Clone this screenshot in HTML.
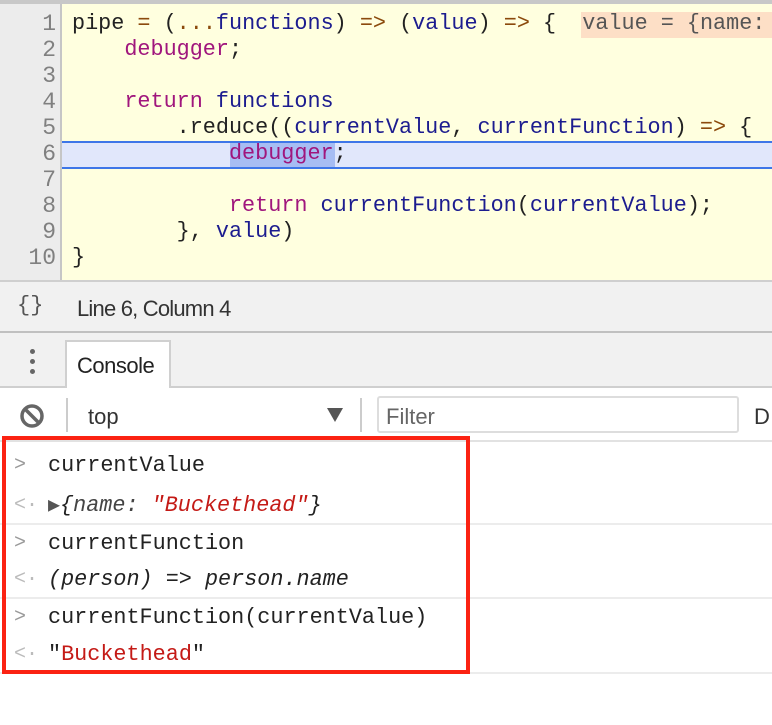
<!DOCTYPE html>
<html><head><style>
*{margin:0;padding:0;box-sizing:border-box}
body{width:772px;height:675px;overflow:hidden;background:#fff;position:relative;font-family:"Liberation Sans",sans-serif}
.mono{font-family:"Liberation Mono","DejaVu Sans Mono",monospace;font-size:21.8px;white-space:pre}
.abs{position:absolute}
#top{left:0;top:0;width:772px;height:4px;background:#c8c8c8}
#gut{left:0;top:4px;width:62px;height:276px;background:#ececec;border-right:2px solid #c6c6c6}
#code{left:62px;top:4px;width:710px;height:276px;background:#ffffdf}
.ln{position:absolute;left:0;width:56px;text-align:right;color:#808080;line-height:26px;font-size:23px}
.cl{position:absolute;left:72px;line-height:26px;color:#222}
.k{color:#a0167d}.v{color:#1c1c8f}.o{color:#8b4a0c}.s{color:#c41a16}
#hl{left:62px;top:141px;width:710px;height:28px;background:#e1e7fb;border-top:2px solid #3e76e8;border-bottom:2px solid #3e76e8}
#sel{left:230px;top:143px;width:105px;height:24px;background:#a7bdf3}
#inl{left:581px;top:12px;width:191px;height:26px;background:#fddfc6}
#status{left:0;top:280px;width:772px;height:53px;background:#f1f1f1;border-top:2px solid #cfcfcf;border-bottom:2px solid #c0c0c0}
#tabs{left:0;top:333px;width:772px;height:55px;background:#f1f1f1;border-bottom:2px solid #cfcfcf}
#tab{left:65px;top:340px;width:106px;height:48px;background:#fff;border:2px solid #d0d0d0;border-bottom:none;font-size:22px;color:#222;padding:11px 0 0 10px;letter-spacing:-0.5px}
#tb{left:0;top:388px;width:772px;height:54px;background:#fff;border-bottom:2px solid #e2e2e2}
.row{position:absolute;left:0;width:772px;line-height:26px;color:#222}
.pr{position:absolute;left:14px;color:#999;font-size:20px}
.ct{position:absolute;left:48px}
.hr{position:absolute;left:0;width:772px;height:2px;background:#ececec}
#red{left:2px;top:436px;width:468px;height:238px;border:4px solid #fb2212}
</style></head><body>
<div id="top" class="abs"></div>
<div id="gut" class="abs"></div>
<div id="code" class="abs"></div>
<div id="inl" class="abs"></div>
<div id="hl" class="abs"></div>
<div id="sel" class="abs"></div>
<div class="mono">
<div class="ln" style="top:11px">1</div>
<div class="ln" style="top:37px">2</div>
<div class="ln" style="top:63px">3</div>
<div class="ln" style="top:89px">4</div>
<div class="ln" style="top:115px">5</div>
<div class="ln" style="top:141px">6</div>
<div class="ln" style="top:167px">7</div>
<div class="ln" style="top:193px">8</div>
<div class="ln" style="top:219px">9</div>
<div class="ln" style="top:245px">10</div>
<div class="cl" style="top:11px">pipe <span class="o">=</span> (<span class="o">...</span><span class="v">functions</span>) <span class="o">=&gt;</span> (<span class="v">value</span>) <span class="o">=&gt;</span> {  <span style="color:#555">value = {name:</span></div>
<div class="cl" style="top:37px">    <span class="k">debugger</span>;</div>
<div class="cl" style="top:89px">    <span class="k">return</span> <span class="v">functions</span></div>
<div class="cl" style="top:115px">        .reduce((<span class="v">currentValue</span>, <span class="v">currentFunction</span>) <span class="o">=&gt;</span> {</div>
<div class="cl" style="top:141px">            <span class="k">debugger</span>;</div>
<div class="cl" style="top:193px">            <span class="k">return</span> <span class="v">currentFunction</span>(<span class="v">currentValue</span>);</div>
<div class="cl" style="top:219px">        }, <span class="v">value</span>)</div>
<div class="cl" style="top:245px">}</div>
</div>
<div id="status" class="abs"><span class="abs mono" style="left:17px;top:11px;color:#555;font-size:22px">{}</span><span class="abs" style="left:77px;top:14px;font-size:22px;color:#333;letter-spacing:-0.8px">Line 6, Column 4</span></div>
<div id="tabs" class="abs">
<div class="abs" style="left:30px;top:16px;width:5px;height:5px;border-radius:50%;background:#666"></div>
<div class="abs" style="left:30px;top:26px;width:5px;height:5px;border-radius:50%;background:#666"></div>
<div class="abs" style="left:30px;top:36px;width:5px;height:5px;border-radius:50%;background:#666"></div>
</div>
<div id="tab" class="abs">Console</div>
<div id="tb" class="abs">
<svg class="abs" style="left:19px;top:15px" width="26" height="26" viewBox="0 0 26 26"><circle cx="13" cy="13" r="10" fill="none" stroke="#666" stroke-width="3.5"/><line x1="6" y1="6" x2="20" y2="20" stroke="#666" stroke-width="3.5"/></svg>
<div class="abs" style="left:66px;top:10px;width:2px;height:34px;background:#ccc"></div>
<span class="abs" style="left:88px;top:16px;font-size:22px;color:#333">top</span>
<div class="abs" style="left:327px;top:20px;width:0;height:0;border-left:8px solid transparent;border-right:8px solid transparent;border-top:14px solid #555"></div>
<div class="abs" style="left:360px;top:10px;width:2px;height:34px;background:#ccc"></div>
<div class="abs" style="left:377px;top:8px;width:362px;height:37px;border:2px solid #ddd;border-radius:3px;font-size:22px;color:#666;padding:6px 0 0 7px">Filter</div>
<span class="abs" style="left:754px;top:16px;font-size:22px;color:#333">D</span>
</div>
<div class="mono">
<div class="row" style="top:453px"><span class="pr">&gt;</span><span class="ct">currentValue</span></div>
<div class="row" style="top:493px"><span class="pr" style="color:#bbb">&lt;·</span><span class="ct" style="left:48px"><span style="font-size:20px;color:#555">▶</span><i>{<span style="color:#444">name: </span><span class="s">"Buckethead"</span>}</i></span></div>
<div class="hr" style="top:523px"></div>
<div class="row" style="top:531px"><span class="pr">&gt;</span><span class="ct">currentFunction</span></div>
<div class="row" style="top:567px"><span class="pr" style="color:#bbb">&lt;·</span><span class="ct"><i>(person) =&gt; person.name</i></span></div>
<div class="hr" style="top:597px"></div>
<div class="row" style="top:605px"><span class="pr">&gt;</span><span class="ct">currentFunction(currentValue)</span></div>
<div class="row" style="top:642px"><span class="pr" style="color:#bbb">&lt;·</span><span class="ct">"<span class="s">Buckethead</span>"</span></div>
<div class="hr" style="top:672px"></div>
</div>
<div id="red" class="abs"></div>
</body></html>
